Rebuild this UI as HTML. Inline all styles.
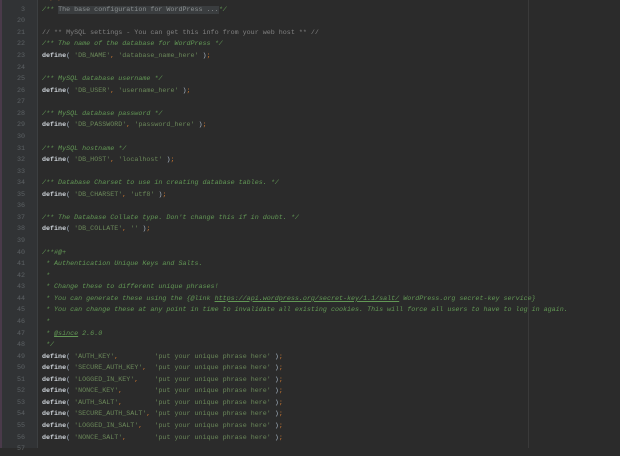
<!DOCTYPE html>
<html><head><meta charset="utf-8"><style>
html,body{margin:0;padding:0;width:620px;height:448px;overflow:hidden;background:#2b2b2b}
.stripe{position:absolute;left:0;top:0;width:2px;height:448px;background:#4a3a4a}
.gut{position:absolute;left:2px;top:0;width:35px;height:448px;background:#313335;border-right:1px solid #3c3f41}
.margin{position:absolute;left:528px;top:0;width:1px;height:448px;background:#3a3a3a}
.code{position:absolute;left:0;top:-6.8px;width:620px;font-family:"Liberation Mono",monospace;font-size:6.7px;line-height:11.57px;color:#a9b7c6}
.l{height:11.57px;position:relative;overflow:visible}
.n{position:absolute;left:0;width:25px;text-align:right;color:#5c6164}
.t{position:absolute;left:42px;white-space:pre}
.c{color:#808080}
.d{color:#629755;font-style:italic}
.k{color:#cdd3d9;font-weight:bold}
.s{color:#6a8759}
.p{color:#cc7832}
.u{text-decoration:underline}
.f{background:#3a3d3f;color:#8a8f90;font-style:normal}
</style></head><body>
<div class="stripe"></div><div class="gut"></div><div class="margin"></div>
<div class="code">
<div class="l"><span class="n">2</span><span class="t"><span class="p">&lt;?php</span></span></div>
<div class="l"><span class="n">3</span><span class="t"><span class="d">/** <span class="f">The base configuration for WordPress ...</span>*/</span></span></div>
<div class="l"><span class="n">20</span></div>
<div class="l"><span class="n">21</span><span class="t"><span class="c">// ** MySQL settings - You can get this info from your web host ** //</span></span></div>
<div class="l"><span class="n">22</span><span class="t"><span class="d">/** The name of the database for WordPress */</span></span></div>
<div class="l"><span class="n">23</span><span class="t"><span class="k">define</span>( <span class="s">'DB_NAME'</span><span class="p">,</span> <span class="s">'database_name_here'</span> )<span class="p">;</span></span></div>
<div class="l"><span class="n">24</span></div>
<div class="l"><span class="n">25</span><span class="t"><span class="d">/** MySQL database username */</span></span></div>
<div class="l"><span class="n">26</span><span class="t"><span class="k">define</span>( <span class="s">'DB_USER'</span><span class="p">,</span> <span class="s">'username_here'</span> )<span class="p">;</span></span></div>
<div class="l"><span class="n">27</span></div>
<div class="l"><span class="n">28</span><span class="t"><span class="d">/** MySQL database password */</span></span></div>
<div class="l"><span class="n">29</span><span class="t"><span class="k">define</span>( <span class="s">'DB_PASSWORD'</span><span class="p">,</span> <span class="s">'password_here'</span> )<span class="p">;</span></span></div>
<div class="l"><span class="n">30</span></div>
<div class="l"><span class="n">31</span><span class="t"><span class="d">/** MySQL hostname */</span></span></div>
<div class="l"><span class="n">32</span><span class="t"><span class="k">define</span>( <span class="s">'DB_HOST'</span><span class="p">,</span> <span class="s">'localhost'</span> )<span class="p">;</span></span></div>
<div class="l"><span class="n">33</span></div>
<div class="l"><span class="n">34</span><span class="t"><span class="d">/** Database Charset to use in creating database tables. */</span></span></div>
<div class="l"><span class="n">35</span><span class="t"><span class="k">define</span>( <span class="s">'DB_CHARSET'</span><span class="p">,</span> <span class="s">'utf8'</span> )<span class="p">;</span></span></div>
<div class="l"><span class="n">36</span></div>
<div class="l"><span class="n">37</span><span class="t"><span class="d">/** The Database Collate type. Don't change this if in doubt. */</span></span></div>
<div class="l"><span class="n">38</span><span class="t"><span class="k">define</span>( <span class="s">'DB_COLLATE'</span><span class="p">,</span> <span class="s">''</span> )<span class="p">;</span></span></div>
<div class="l"><span class="n">39</span></div>
<div class="l"><span class="n">40</span><span class="t"><span class="d">/**#@+</span></span></div>
<div class="l"><span class="n">41</span><span class="t"><span class="d"> * Authentication Unique Keys and Salts.</span></span></div>
<div class="l"><span class="n">42</span><span class="t"><span class="d"> *</span></span></div>
<div class="l"><span class="n">43</span><span class="t"><span class="d"> * Change these to different unique phrases!</span></span></div>
<div class="l"><span class="n">44</span><span class="t"><span class="d"> * You can generate these using the {@link <span class="u">https://api.wordpress.org/secret-key/1.1/salt/</span> WordPress.org secret-key service}</span></span></div>
<div class="l"><span class="n">45</span><span class="t"><span class="d"> * You can change these at any point in time to invalidate all existing cookies. This will force all users to have to log in again.</span></span></div>
<div class="l"><span class="n">46</span><span class="t"><span class="d"> *</span></span></div>
<div class="l"><span class="n">47</span><span class="t"><span class="d"> * <span class="u">@since</span> 2.6.0</span></span></div>
<div class="l"><span class="n">48</span><span class="t"><span class="d"> */</span></span></div>
<div class="l"><span class="n">49</span><span class="t"><span class="k">define</span>( <span class="s">'AUTH_KEY'</span><span class="p">,</span>         <span class="s">'put your unique phrase here'</span> )<span class="p">;</span></span></div>
<div class="l"><span class="n">50</span><span class="t"><span class="k">define</span>( <span class="s">'SECURE_AUTH_KEY'</span><span class="p">,</span>  <span class="s">'put your unique phrase here'</span> )<span class="p">;</span></span></div>
<div class="l"><span class="n">51</span><span class="t"><span class="k">define</span>( <span class="s">'LOGGED_IN_KEY'</span><span class="p">,</span>    <span class="s">'put your unique phrase here'</span> )<span class="p">;</span></span></div>
<div class="l"><span class="n">52</span><span class="t"><span class="k">define</span>( <span class="s">'NONCE_KEY'</span><span class="p">,</span>        <span class="s">'put your unique phrase here'</span> )<span class="p">;</span></span></div>
<div class="l"><span class="n">53</span><span class="t"><span class="k">define</span>( <span class="s">'AUTH_SALT'</span><span class="p">,</span>        <span class="s">'put your unique phrase here'</span> )<span class="p">;</span></span></div>
<div class="l"><span class="n">54</span><span class="t"><span class="k">define</span>( <span class="s">'SECURE_AUTH_SALT'</span><span class="p">,</span> <span class="s">'put your unique phrase here'</span> )<span class="p">;</span></span></div>
<div class="l"><span class="n">55</span><span class="t"><span class="k">define</span>( <span class="s">'LOGGED_IN_SALT'</span><span class="p">,</span>   <span class="s">'put your unique phrase here'</span> )<span class="p">;</span></span></div>
<div class="l"><span class="n">56</span><span class="t"><span class="k">define</span>( <span class="s">'NONCE_SALT'</span><span class="p">,</span>       <span class="s">'put your unique phrase here'</span> )<span class="p">;</span></span></div>
<div class="l"><span class="n">57</span></div>
</div>
</body></html>
